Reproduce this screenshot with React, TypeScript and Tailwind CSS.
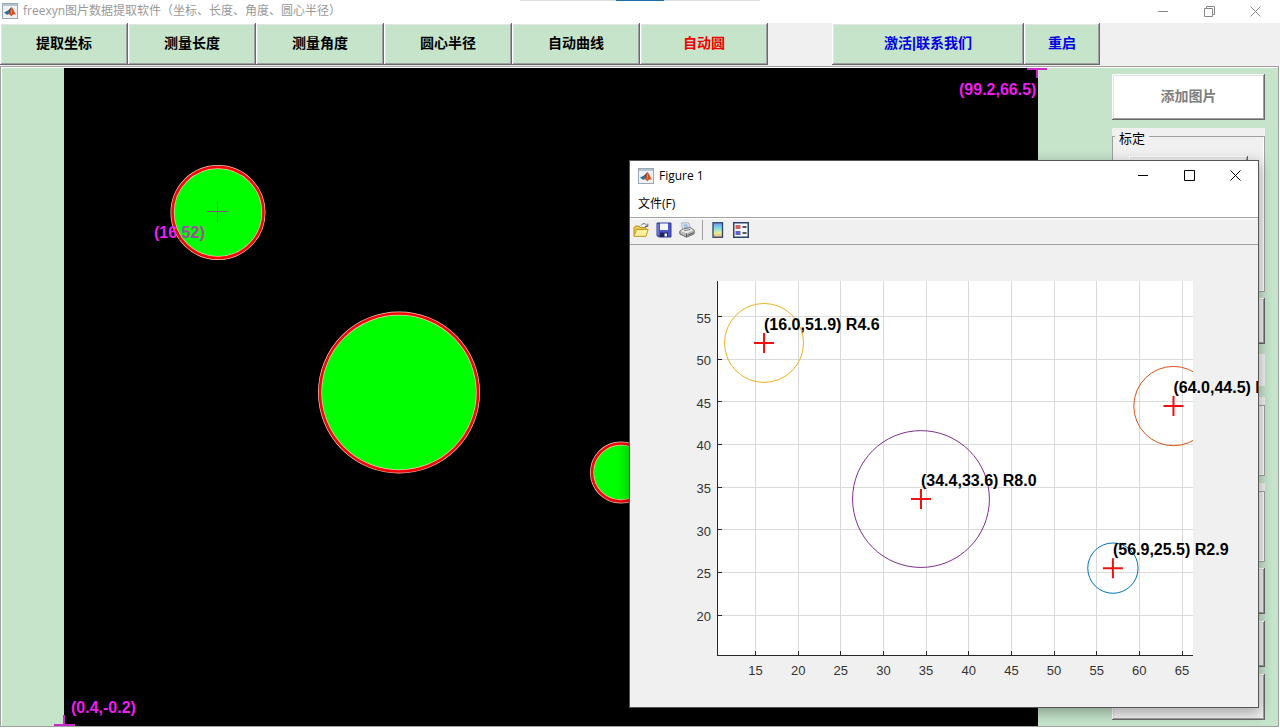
import React from "react";
import clsx from "clsx";

const BEVEL =
  "shadow-[inset_-1px_-1px_0_#696969,inset_1px_1px_0_#ffffff,inset_-2px_-2px_0_#a0a0a0,inset_2px_2px_0_#e3e3e3]";

const tools = ["提取坐标", "测量长度", "测量角度", "圆心半径", "自动曲线"];

const xTicks = [15, 20, 25, 30, 35, 40, 45, 50, 55, 60, 65];
const yTicks = [55, 50, 45, 40, 35, 30, 25, 20];

// Plot box inside the figure body
const LEFT = 87;
const RIGHT = 563;
const TOP = 36;
const BOTTOM = 411;

const px = (x: number) => 125.5 + (x - 15) * 8.53;
const py = (y: number) => 71.5 + (55 - y) * 8.53;

const found = [
  { x: 16, y: 51.9, r: 4.63, color: "#edb120", label: "(16.0,51.9) R4.6" },
  { x: 34.4, y: 33.6, r: 8.02, color: "#7e2f8e", label: "(34.4,33.6) R8.0" },
  { x: 64, y: 44.5, r: 4.65, color: "#d95319", label: "(64.0,44.5) R4.6" },
  { x: 56.9, y: 25.5, r: 2.95, color: "#0072bd", label: "(56.9,25.5) R2.9" },
];

const discs = [
  { x: 154, y: 144.5, r: 45.5 },
  { x: 335, y: 324.5, r: 79 },
  { x: 557, y: 404.5, r: 29 },
  { x: 627, y: 218, r: 45 },
];

const MatlabIcon = () => (
  <svg width="16" height="16" viewBox="0 0 16 16" aria-hidden="true">
    <rect x="0.5" y="0.5" width="15" height="15" fill="#eef2f5" stroke="#9aa8b5" />
    <rect x="1" y="1" width="14" height="2" fill="#b4c4d3" />
    <path d="M2 9.5 6 7.5 7.8 10 5.2 12Z" fill="#2d6f9f" />
    <path d="M6 7.5C7.5 7 8.3 4.5 9.5 4L8 10.5Z" fill="#5b3a45" />
    <path d="M9.5 4C11 5 12.3 9 14 11.8 12 10.6 11 11.4 9.2 13.5 8.3 11.6 7.3 11 6 11.3 8.2 9.5 8.7 6.5 9.5 4Z" fill="#d4511e" />
    <path d="M9.6 5C10.2 7 10.3 9 9.4 12 9 10 9.3 8 9.6 5Z" fill="#f3a23a" />
  </svg>
);

const FolderIcon = () => (
  <svg width="16" height="16" viewBox="0 0 16 16" aria-hidden="true">
    <path d="M8 3.5C10 .8 12.5 1 13.6 3.6M14.8 1.6V4.5H12" fill="none" stroke="#5d6670" />
    <path d="M1 14V5.5L2.5 4H6L7.5 5.5H13V14Z" fill="#e8c550" stroke="#b8941c" />
    <path d="M1 14.3 3.5 7.5H15.2L13 14.3Z" fill="#fff09a" stroke="#c29c28" />
  </svg>
);

const SaveIcon = () => (
  <svg width="16" height="16" viewBox="0 0 16 16" aria-hidden="true">
    <path d="M1 1H15V15H2.5L1 13.5Z" fill="#4c56c6" stroke="#33388c" />
    <path d="M4 1.5H12V8H4Z" fill="#f4f6fc" />
    <path d="M4 10.5H12V15H4Z" fill="#20245e" />
    <path d="M8.5 11.5H11V14.5H8.5Z" fill="#f4f6fc" />
    <path d="M2 2V13" stroke="#8990e8" />
  </svg>
);

const PrintIcon = () => (
  <svg width="16" height="16" viewBox="0 0 16 16" aria-hidden="true">
    <path d="M3.5 7.5 2.5 1 9.5.8 11.5 6.5Z" fill="#e7f1fb" stroke="#9fb0c2" />
    <path d="M4.5 3.2 8.5 3M5 5.2 9.5 5" stroke="#5c8fc4" />
    <path d="M.8 9 4 7 11.5 5.6 15.2 8.2V11.8L7.5 15.2.8 12Z" fill="#b9b9b9" stroke="#6e6e6e" />
    <path d="M1.5 9 4.2 7.5 11.3 6.3 14.4 8.3 7.4 11.2Z" fill="#ededed" />
    <path d="M7.5 11.5V14.8M8.5 13.3 14.5 10.7" stroke="#555555" />
    <path d="M5 8.8 11.5 7.4" stroke="#777777" />
  </svg>
);

const ColorbarIcon = () => (
  <svg width="16" height="16" viewBox="0 0 16 16" aria-hidden="true">
    <defs>
      <linearGradient id="bar" x1="0" y1="0" x2="0" y2="1">
        <stop offset="0" stopColor="#6d8fe8" />
        <stop offset="0.35" stopColor="#79dceb" />
        <stop offset="0.7" stopColor="#e9ee91" />
        <stop offset="1" stopColor="#f3ab8d" />
      </linearGradient>
    </defs>
    <rect x="3" y="0.75" width="9.5" height="14.5" fill="url(#bar)" stroke="#2b4468" strokeWidth="1.3" />
  </svg>
);

const LegendIcon = () => (
  <svg width="16" height="16" viewBox="0 0 16 16" aria-hidden="true">
    <rect x="0.75" y="0.75" width="14.5" height="14.5" fill="#f5f8fd" stroke="#2b4468" strokeWidth="1.5" />
    <rect x="2.5" y="3" width="5" height="4" fill="#d2606a" />
    <rect x="2.5" y="9" width="5" height="4" fill="#6263cf" />
    <path d="M9.5 5H13.5M9.5 11H13.5" stroke="#202020" strokeWidth="1.3" />
  </svg>
);

const WindowButtons = ({ restore, color }: { restore?: boolean; color: string }) => (
  <div className={clsx("ml-auto flex h-full", color)}>
    <button aria-label="最小化" className="flex w-[46px] items-center justify-center">
      <svg width="11" height="11" viewBox="0 0 11 11" fill="none" stroke="currentColor">
        <path d="M0 5.5H10" />
      </svg>
    </button>
    <button aria-label={restore ? "还原" : "最大化"} className="flex w-[46px] items-center justify-center">
      <svg width="11" height="11" viewBox="0 0 11 11" fill="none" stroke="currentColor">
        {restore ? <path d="M.5 2.5H8.5V10.5H.5ZM2.5 2.5V.5H10.5V8.5H8.5" /> : <path d="M.5 .5H10.5V10.5H.5Z" />}
      </svg>
    </button>
    <button aria-label="关闭" className="flex w-[46px] items-center justify-center">
      <svg width="11" height="11" viewBox="0 0 11 11" fill="none" stroke="currentColor">
        <path d="M.5 .5 10.5 10.5M10.5 .5 .5 10.5" />
      </svg>
    </button>
  </div>
);

const ToolButton = ({ className, children }: { className?: string; children: React.ReactNode }) => (
  <button
    className={clsx(
      "h-[42px] bg-[#c5e4ca] pb-[2px] font-['Liberation_Sans','Noto_Sans_CJK_SC',sans-serif] text-sm font-bold",
      BEVEL,
      className
    )}
  >
    {children}
  </button>
);

const SideButton = ({ className, label }: { className?: string; label: string }) => (
  <button aria-label={label} className={clsx("h-[46px] w-full shrink-0 bg-[#f0f0f0]", BEVEL, className)} />
);

const Group = ({ className, legend, children }: { className?: string; legend?: string; children?: React.ReactNode }) => (
  <div className={clsx("shrink-0 bg-[#f0f0f0]", className)}>
    <fieldset className="h-full border border-[#a0a0a0] px-4 shadow-[inset_-1px_-1px_0_#ffffff]">
      <legend className="-ml-[14px] h-4 px-1 text-[13px] leading-5">{legend}</legend>
      {children}
    </fieldset>
  </div>
);

const ImageCanvas = () => (
  <div className="relative mt-px flex-1 bg-black">
    <svg className="absolute inset-0 size-full overflow-visible" viewBox="0 0 974 658">
      {discs.map((d) => (
        <g key={d.x}>
          <circle cx={d.x} cy={d.y} r={d.r} fill="#00ff00" stroke="#f5c8b0" strokeWidth="4" />
          <circle cx={d.x} cy={d.y} r={d.r} fill="none" stroke="#ee0808" strokeWidth="2.6" />
        </g>
      ))}
      <g fill="none" stroke="#c828c8" strokeWidth="2">
        <path d="M963 1H983M973 0V10" />
        <path d="M-10 657H11M0 647V658" />
      </g>
      <path d="M143 143.5H164M153.5 133V154" stroke="#8a4a8a" />
      <g className="font-['Liberation_Sans',sans-serif] text-base font-bold" fill="#f01ef0">
        <text x="895" y="27">(99.2,66.5)</text>
        <text x="7" y="645">(0.4,-0.2)</text>
        <text x="90" y="170">
          (16<tspan fill="#d01818">,</tspan>
          <tspan fill="#a648a6">52)</tspan>
        </text>
      </g>
    </svg>
  </div>
);

const Plot = () => (
  <svg className="block h-[462px] w-full" viewBox="0 0 628 462" role="img" aria-label="Figure 1">
    <defs>
      <clipPath id="axes">
        <rect x={LEFT} y={TOP} width={RIGHT - LEFT} height={BOTTOM - TOP} />
      </clipPath>
    </defs>
    <rect x={LEFT} y={TOP} width={RIGHT - LEFT} height={BOTTOM - TOP} fill="#ffffff" />
    <g shapeRendering="crispEdges">
      {xTicks.map((t) => (
        <g key={t}>
          <path d={`M${px(t)} ${TOP}V${BOTTOM}`} stroke="#dadada" />
          <path d={`M${px(t)} ${BOTTOM - 5}V${BOTTOM}`} stroke="#262626" />
        </g>
      ))}
      {yTicks.map((t) => (
        <g key={t}>
          <path d={`M${LEFT} ${py(t)}H${RIGHT}`} stroke="#dadada" />
          <path d={`M${LEFT} ${py(t)}H${LEFT + 5}`} stroke="#262626" />
        </g>
      ))}
      <path d={`M${LEFT + 0.5} ${TOP}V${BOTTOM - 0.5}H${RIGHT}`} fill="none" stroke="#262626" />
    </g>
    <g className="font-['Liberation_Sans',sans-serif] text-[13px]" fill="#333333">
      {xTicks.map((t) => (
        <text key={t} x={px(t)} y="430" textAnchor="middle">
          {t}
        </text>
      ))}
      {yTicks.map((t) => (
        <text key={t} x="81" y={py(t) + 6} textAnchor="end">
          {t}
        </text>
      ))}
    </g>
    <g clipPath="url(#axes)" fill="none">
      {found.map((c) => (
        <circle key={c.label} cx={px(c.x)} cy={py(c.y)} r={c.r * 8.53} stroke={c.color} />
      ))}
    </g>
    {found.map((c) => (
      <g key={c.label}>
        <path
          d={`M${px(c.x) - 10} ${py(c.y)}h20M${px(c.x)} ${py(c.y) - 10}v20`}
          stroke="#f01010"
          strokeWidth="2"
        />
        <text
          x={px(c.x)}
          y={py(c.y) - 13}
          className="font-['Liberation_Sans',sans-serif] text-base font-bold"
          fill="#000000"
        >
          {c.label}
        </text>
      </g>
    ))}
  </svg>
);

const figureTools = [
  { label: "打开", icon: <FolderIcon /> },
  { label: "保存", icon: <SaveIcon /> },
  { label: "打印", icon: <PrintIcon /> },
];

const FigureWindow = () => (
  <section className="absolute top-[160px] left-[629px] w-[630px] overflow-hidden border border-[#555555] bg-[#f0f0f0] shadow-[0_4px_12px_1px_rgba(0,0,0,0.3)]">
    <div className="flex h-[29px] items-center bg-white pl-2 text-xs text-black">
      <MatlabIcon />
      <span className="ml-[5px]">Figure 1</span>
      <WindowButtons color="text-black" />
    </div>
    <div className="flex h-7 items-center border-b border-[#a0a0a0] bg-white pl-2 text-xs">
      <button>文件(F)</button>
    </div>
    <div className="flex h-[27px] items-center border-b border-[#a0a0a0] pb-[2px] shadow-[inset_0_1px_0_#ffffff]">
      <div className="-ml-px flex">
        {figureTools.map((t) => (
          <button key={t.label} aria-label={t.label} className="flex w-[23px] justify-center">
            {t.icon}
          </button>
        ))}
      </div>
      <div className="mx-1 h-5 w-px bg-[#a0a0a0]" />
      <div className="-ml-px flex">
        <button aria-label="颜色栏" className="flex w-[23px] justify-center">
          <ColorbarIcon />
        </button>
        <button aria-label="图例" className="flex w-[23px] justify-center">
          <LegendIcon />
        </button>
      </div>
    </div>
    <Plot />
  </section>
);

const App = () => {
  return (
    <div className="relative flex min-h-screen flex-col overflow-hidden bg-[#f0f0f0] font-['Open_Sans','Noto_Sans_CJK_SC',sans-serif] text-black">
      {/* Title bar */}
      <header className="relative flex h-[23px] items-center bg-white pr-[2px] pb-px pl-[2px] text-xs text-[#999999]">
        <MatlabIcon />
        <h1 className="ml-[5px]">freexyn图片数据提取软件（坐标、长度、角度、圆心半径）</h1>
        <WindowButtons restore color="text-[#888888]" />
        <div className="absolute inset-x-0 top-0 mx-auto flex h-px w-60 justify-center bg-[#dddddd]">
          <div className="h-px w-12 bg-[#1a6fb0]" />
        </div>
      </header>

      {/* Tools */}
      <nav className="mb-px flex">
        {tools.map((t) => (
          <ToolButton key={t} className="w-32">
            {t}
          </ToolButton>
        ))}
        <ToolButton className="w-32 text-[#f00000]">自动圆</ToolButton>
        <ToolButton className="ml-16 w-48 text-[#0000e0]">激活|联系我们</ToolButton>
        <ToolButton className="w-[76px] text-[#0000e0]">重启</ToolButton>
      </nav>

      <main className="mr-px mb-px flex flex-1 border border-[#a0a0a0] bg-[#c5e4ca] pr-[13px] pl-[63px] shadow-[inset_1px_1px_0_#ffffff,1px_1px_0_#ffffff]">
        <ImageCanvas />
        <aside className="ml-[74px] flex w-[153px] flex-col pt-[7px] pb-[6px]">
          <button className={clsx("h-[46px] shrink-0 bg-white pb-[2px] text-sm font-bold text-[#808080]", BEVEL)}>
            添加图片
          </button>
          <Group className="mt-2 h-[164px]" legend="标定">
            <SideButton label="标定" className="mt-3" />
          </Group>
          <SideButton label="计算" className="mt-[6px]" />
          <div className="mt-[10px] h-8 shrink-0 bg-[#f0f0f0]" />
          <Group className="mt-[11px] h-[79px]" />
          <Group className="mt-[7px] h-[79px]" />
          <SideButton label="撤销" className="mt-[6px]" />
          <SideButton label="清除" className="mt-[7px]" />
          <SideButton label="导出" className="mt-[7px]" />
        </aside>
      </main>

      <FigureWindow />
    </div>
  );
};

export default App;
